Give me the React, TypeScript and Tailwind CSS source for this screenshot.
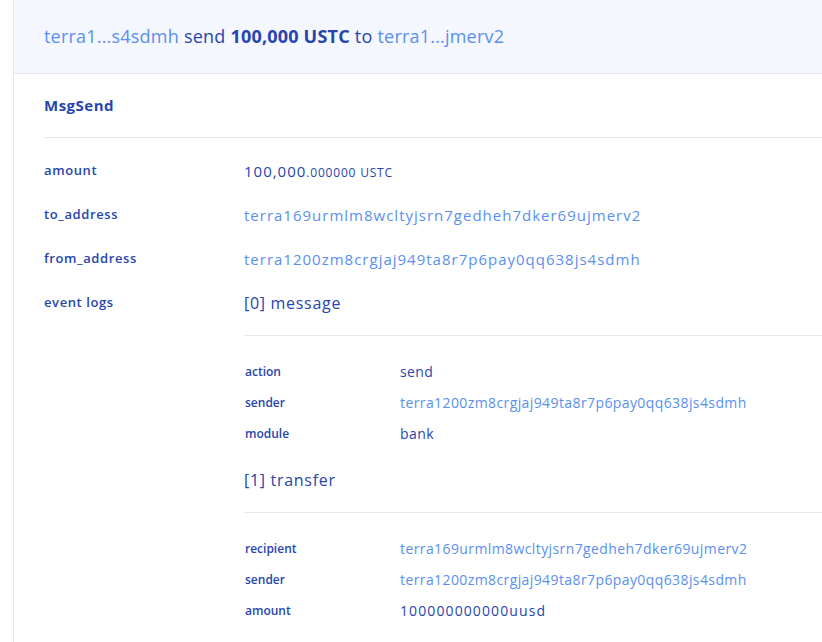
import React from 'react';

const FONT = { fontFamily: '"Open Sans", "Liberation Sans", sans-serif' };

type Row = { label: string; value: React.ReactNode };

function Link({ children }: { children: React.ReactNode }) {
  return <span className="text-[#5a8ff0]">{children}</span>;
}

function LogRow({ label, value }: Row) {
  return (
    <div className="flex h-[31px] items-center">
      <div className="w-[155px] shrink-0 text-[12px] font-semibold text-[#2845ae]">{label}</div>
      <div className="text-[14px] tracking-[0.4px] text-[#2845ae]">{value}</div>
    </div>
  );
}

function EventLog({ title, rows, last }: { title: string; rows: Row[]; last?: boolean }) {
  return (
    <div className={last ? '' : 'mb-[9px]'}>
      <div className="flex h-[44px] items-center text-[16px] tracking-[0.7px] text-[#2845ae]">{title}</div>
      <div className="mt-[10px] border-t border-[#e3e6ee] pt-[20px] pl-px">
        {rows.map((r, i) => (
          <LogRow key={i} label={r.label} value={r.value} />
        ))}
      </div>
    </div>
  );
}

function Field({ label, children }: { label: string; children: React.ReactNode }) {
  return (
    <div className="flex items-start">
      <div className="flex h-[44px] w-[200px] shrink-0 items-center text-[13px] font-semibold tracking-[0.6px] text-[#2845ae]">
        {label}
      </div>
      <div className="min-w-0 flex-1">{children}</div>
    </div>
  );
}

export default function App() {
  return (
    <div style={FONT} className="min-h-screen bg-white">
      <div className="ml-[13px] min-h-[642px] border-l border-[#e3e6ee]">
        <div className="flex h-[74px] items-center border-b border-[#e3e6ee] bg-[#f4f7fe] pl-[30px] text-[18px] tracking-[0.2px] text-[#2845ae]">
          <Link>terra1...s4sdmh</Link>
          <span className="mx-[5px]">send</span>
          <span className="font-bold">100,000 USTC</span>
          <span className="mx-[5px]">to</span>
          <Link>terra1...jmerv2</Link>
        </div>

        <div className="pl-[30px]">
          <div className="flex h-[64px] items-center border-b border-[#e3e6ee] text-[15px] font-bold tracking-[0.5px] text-[#2845ae]">
            MsgSend
          </div>

          <div className="pt-[11px]">
            <Field label="amount">
              <div className="flex h-[44px] items-center text-[#2845ae]">
                <span className="text-[15px] tracking-[1px]">
                  100,000<span className="text-[12px] tracking-[0.8px]">.000000 USTC</span>
                </span>
              </div>
            </Field>
            <Field label="to_address">
              <div className="flex h-[44px] items-center text-[15px] tracking-[1px]">
                <Link>terra169urmlm8wcltyjsrn7gedheh7dker69ujmerv2</Link>
              </div>
            </Field>
            <Field label="from_address">
              <div className="flex h-[44px] items-center text-[15px] tracking-[1px]">
                <Link>terra1200zm8crgjaj949ta8r7p6pay0qq638js4sdmh</Link>
              </div>
            </Field>
            <Field label="event logs">
              <EventLog
                title="[0] message"
                rows={[
                  { label: 'action', value: 'send' },
                  { label: 'sender', value: <Link>terra1200zm8crgjaj949ta8r7p6pay0qq638js4sdmh</Link> },
                  { label: 'module', value: 'bank' },
                ]}
              />
              <EventLog
                title="[1] transfer"
                last
                rows={[
                  { label: 'recipient', value: <Link>terra169urmlm8wcltyjsrn7gedheh7dker69ujmerv2</Link> },
                  { label: 'sender', value: <Link>terra1200zm8crgjaj949ta8r7p6pay0qq638js4sdmh</Link> },
                  { label: 'amount', value: <span className="tracking-[1.1px]">100000000000uusd</span> },
                ]}
              />
            </Field>
          </div>
        </div>
      </div>
    </div>
  );
}
